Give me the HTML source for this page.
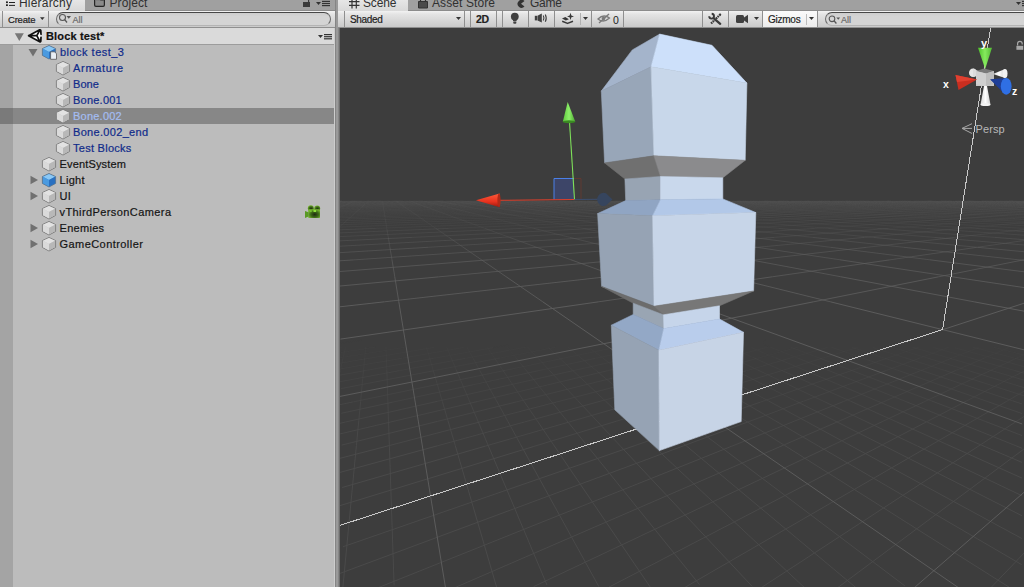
<!DOCTYPE html>
<html><head><meta charset="utf-8">
<style>
html,body{margin:0;padding:0;width:1024px;height:587px;overflow:hidden;background:#a2a2a2;}
body{position:relative;font-family:"Liberation Sans",sans-serif;}
.a{position:absolute;}
.t{position:absolute;white-space:nowrap;font-size:11px;line-height:16px;height:16px;-webkit-text-stroke:0.2px currentColor;}
.tabbar{top:0;height:10px;background:#a0a0a0;border-bottom:1px solid #8c8c8c;}
.toolbar{top:11px;height:16px;background:linear-gradient(#f2f2f2,#e4e4e4 20%,#cacaca);border-bottom:1px solid #8f8f8f;}
.sep{position:absolute;top:11px;width:1px;height:16px;background:#8f8f8f;}
.pill{position:absolute;border:1px solid #6a6a6a;border-top-color:#474747;border-bottom-color:#b4b4b4;border-radius:7px;background:linear-gradient(#cdcdcd,#d4d4d4 30%,#d4d4d4);}
.row{position:absolute;left:13px;width:322px;height:16px;}
.blue{color:#102b8a;}
.blk{color:#141414;}
</style></head><body>
<!-- LEFT PANEL -->
<div class="a tabbar" style="left:0;width:335px;"></div>
<div class="a" style="left:0;top:0;width:85px;height:11px;background:linear-gradient(#e6e6e6,#d8d8d8);"></div>
<div class="a toolbar" style="left:0;width:335px;"></div>
<div class="a" style="left:0;top:28px;width:335px;height:16px;background:#dadada;border-bottom:1px solid #9c9c9c;"></div>
<div class="a" style="left:0;top:45px;width:13px;height:542px;background:#a4a4a4;"></div>
<div class="a" style="left:13px;top:45px;width:322px;height:542px;background:#bcbcbc;"></div>
<div class="a" style="left:0;top:108px;width:13px;height:16px;background:#7a7a7a;"></div>
<div class="a" style="left:13px;top:108px;width:322px;height:16px;background:#878787;"></div>


<!-- tab texts -->
<svg class="a" style="left:5px;top:0px" width="12" height="8"><rect x="1" y="1.4" width="1.9" height="1.7" fill="#222"/><rect x="1" y="4.3" width="1.9" height="1.7" fill="#222"/><rect x="4" y="2" width="6" height="1" fill="#222"/><rect x="4" y="4.9" width="6" height="1" fill="#222"/></svg>
<div class="t" style="left:19px;top:-5px;color:#222;font-size:12px;letter-spacing:0.2px;-webkit-text-stroke:0;color:#303030">Hierarchy</div>
<svg class="a" style="left:93px;top:0" width="13" height="9"><rect x="1.6" y="-3" width="9.8" height="9.3" rx="1.3" fill="#8a8a8a" stroke="#262626" stroke-width="1.2"/><rect x="7.2" y="-1" width="3.6" height="1.5" fill="#262626"/><rect x="2.4" y="-1" width="4.5" height="1.6" fill="#7a7a7a"/></svg>
<div class="t" style="left:109.5px;top:-5px;color:#2a2a2a;font-size:12px;letter-spacing:0.1px;-webkit-text-stroke:0;color:#303030">Project</div>
<svg class="a" style="left:302px;top:0" width="10" height="8"><rect x="1" y="2" width="7" height="5" fill="#3a3a3a"/><rect x="6" y="0" width="1.2" height="3" fill="#3a3a3a"/></svg>
<svg class="a" style="left:315px;top:0" width="17" height="8"><polygon points="1,2 6,2 3.5,5" fill="#333"/><rect x="7" y="0.8" width="8" height="1.2" fill="#333"/><rect x="7" y="2.9" width="8" height="1.2" fill="#333"/><rect x="7" y="5" width="8" height="1.2" fill="#333"/></svg>
<!-- toolbar -->
<div class="sep" style="left:2px"></div>
<div class="sep" style="left:48px"></div>
<div class="t" style="left:8px;top:12px;color:#1e1e1e;font-size:9.5px;letter-spacing:-0.2px">Create</div>
<svg class="a" style="left:40px;top:16.5px" width="6" height="4"><polygon points="0,0.3 4.6,0.3 2.3,3" fill="#333"/></svg>
<div class="pill" style="left:55.5px;top:12px;width:273.5px;height:12px;"></div>
<svg class="a" style="left:58px;top:13px" width="14" height="11"><circle cx="4.5" cy="4.5" r="3" fill="none" stroke="#555" stroke-width="1.1"/><line x1="6.7" y1="6.7" x2="9" y2="9.5" stroke="#555" stroke-width="1.3"/><polygon points="8.5,3 13,3 10.75,5.8" fill="#555"/></svg>
<div class="t" style="left:72.5px;top:12px;color:#6a6a6a;font-size:9px;">All</div>
<!-- header -->
<svg class="a" style="left:14px;top:32px" width="11" height="10"><polygon points="0.8,1.2 9.8,1.2 5.3,9" fill="#777"/></svg>
<svg class="a" style="left:27px;top:28px" width="16" height="16"><path d="M1.4 7.7 L12.9 1.6 L14 6.6 L13.2 7.8 L14 9 L12.9 14.3 Z" fill="#fff"/><path d="M1.6 7.7 L12.7 1.8 Q13.6 1.6 13.8 2.6 L14 6.2 M14 9.3 L13.8 13 Q13.6 14.1 12.7 13.7 L1.6 7.7 M9.8 7.7 H2.5 M9.8 7.7 L12.8 2.2 M9.8 7.7 L12.8 13.4" fill="none" stroke="#111" stroke-width="1.75" stroke-linejoin="round" stroke-linecap="round"/></svg>
<div class="t" style="left:46px;top:28px;color:#111;font-weight:bold;font-size:11px;letter-spacing:0.15px">Block test*</div>
<svg class="a" style="left:317px;top:33px" width="17" height="8"><polygon points="1,2 6,2 3.5,5" fill="#333"/><rect x="7" y="1" width="8" height="1.2" fill="#333"/><rect x="7" y="3.1" width="8" height="1.2" fill="#333"/><rect x="7" y="5.2" width="8" height="1.2" fill="#333"/></svg>
<!-- rows -->
<svg class="a" style="left:28px;top:47px" width="11" height="10"><polygon points="0.5,2 9.5,2 5,9.5" fill="#707070"/></svg>
<svg class="a" style="left:41px;top:44px" width="16" height="16">
<polygon points="8,1.5 14.6,4.6 14.6,11.4 8,15 1.4,11.4 1.4,4.6" fill="#3a86d0" stroke="#5a6e80" stroke-width="0.8" stroke-linejoin="round"/>
<polygon points="8,1.9 14.1,4.8 8,8 1.9,4.8" fill="#8cc8f4"/>
<polygon points="1.9,4.8 8,8 8,14.5 1.9,11.2" fill="#4a9ae0"/>
<polygon points="14.1,4.8 8,8 8,14.5 14.1,11.2" fill="#2a70c0"/>
<path d="M9.6 7.8 H13.5 L15.5 9.8 V15.3 H9.6 Z" fill="#e8eef4" stroke="#555" stroke-width="0.8"/></svg>
<div class="t blue" style="left:60px;top:44px;letter-spacing:0.48px">block test_3</div>
<svg class="a" style="left:55px;top:60px" width="16" height="16">
<polygon points="8,1.5 14.6,4.6 14.6,11.4 8,15 1.4,11.4 1.4,4.6" fill="#c8c8c8" stroke="#7c7c7c" stroke-width="1" stroke-linejoin="round"/>
<polygon points="8,1.9 14.1,4.8 8,8 1.9,4.8" fill="#e2e2e2"/>
<polygon points="1.9,4.8 8,8 8,14.5 1.9,11.2" fill="#dadada"/>
<polygon points="14.1,4.8 8,8 8,14.5 14.1,11.2" fill="#b8b8b8"/>
</svg>
<div class="t blue" style="left:73px;top:60px;letter-spacing:0.7px;">Armature</div>
<svg class="a" style="left:55px;top:76px" width="16" height="16">
<polygon points="8,1.5 14.6,4.6 14.6,11.4 8,15 1.4,11.4 1.4,4.6" fill="#c8c8c8" stroke="#7c7c7c" stroke-width="1" stroke-linejoin="round"/>
<polygon points="8,1.9 14.1,4.8 8,8 1.9,4.8" fill="#e2e2e2"/>
<polygon points="1.9,4.8 8,8 8,14.5 1.9,11.2" fill="#dadada"/>
<polygon points="14.1,4.8 8,8 8,14.5 14.1,11.2" fill="#b8b8b8"/>
</svg>
<div class="t blue" style="left:73px;top:76px;letter-spacing:0.05px;">Bone</div>
<svg class="a" style="left:55px;top:92px" width="16" height="16">
<polygon points="8,1.5 14.6,4.6 14.6,11.4 8,15 1.4,11.4 1.4,4.6" fill="#c8c8c8" stroke="#7c7c7c" stroke-width="1" stroke-linejoin="round"/>
<polygon points="8,1.9 14.1,4.8 8,8 1.9,4.8" fill="#e2e2e2"/>
<polygon points="1.9,4.8 8,8 8,14.5 1.9,11.2" fill="#dadada"/>
<polygon points="14.1,4.8 8,8 8,14.5 14.1,11.2" fill="#b8b8b8"/>
</svg>
<div class="t blue" style="left:73px;top:92px;letter-spacing:0.23px;">Bone.001</div>
<svg class="a" style="left:55px;top:108px" width="16" height="16">
<polygon points="8,1.5 14.6,4.6 14.6,11.4 8,15 1.4,11.4 1.4,4.6" fill="#c8c8c8" stroke="#7c7c7c" stroke-width="1" stroke-linejoin="round"/>
<polygon points="8,1.9 14.1,4.8 8,8 1.9,4.8" fill="#e2e2e2"/>
<polygon points="1.9,4.8 8,8 8,14.5 1.9,11.2" fill="#dadada"/>
<polygon points="14.1,4.8 8,8 8,14.5 14.1,11.2" fill="#b8b8b8"/>
</svg>
<div class="t " style="left:73px;top:108px;color:#a4bdf2;letter-spacing:0.23px;">Bone.002</div>
<svg class="a" style="left:55px;top:124px" width="16" height="16">
<polygon points="8,1.5 14.6,4.6 14.6,11.4 8,15 1.4,11.4 1.4,4.6" fill="#c8c8c8" stroke="#7c7c7c" stroke-width="1" stroke-linejoin="round"/>
<polygon points="8,1.9 14.1,4.8 8,8 1.9,4.8" fill="#e2e2e2"/>
<polygon points="1.9,4.8 8,8 8,14.5 1.9,11.2" fill="#dadada"/>
<polygon points="14.1,4.8 8,8 8,14.5 14.1,11.2" fill="#b8b8b8"/>
</svg>
<div class="t blue" style="left:73px;top:124px;letter-spacing:0.32px;">Bone.002_end</div>
<svg class="a" style="left:55px;top:140px" width="16" height="16">
<polygon points="8,1.5 14.6,4.6 14.6,11.4 8,15 1.4,11.4 1.4,4.6" fill="#c8c8c8" stroke="#7c7c7c" stroke-width="1" stroke-linejoin="round"/>
<polygon points="8,1.9 14.1,4.8 8,8 1.9,4.8" fill="#e2e2e2"/>
<polygon points="1.9,4.8 8,8 8,14.5 1.9,11.2" fill="#dadada"/>
<polygon points="14.1,4.8 8,8 8,14.5 14.1,11.2" fill="#b8b8b8"/>
</svg>
<div class="t blue" style="left:73px;top:140px;letter-spacing:0.27px;">Test Blocks</div>
<svg class="a" style="left:41px;top:156px" width="16" height="16">
<polygon points="8,1.5 14.6,4.6 14.6,11.4 8,15 1.4,11.4 1.4,4.6" fill="#c8c8c8" stroke="#7c7c7c" stroke-width="1" stroke-linejoin="round"/>
<polygon points="8,1.9 14.1,4.8 8,8 1.9,4.8" fill="#e2e2e2"/>
<polygon points="1.9,4.8 8,8 8,14.5 1.9,11.2" fill="#dadada"/>
<polygon points="14.1,4.8 8,8 8,14.5 14.1,11.2" fill="#b8b8b8"/>
</svg>
<div class="t blk" style="left:59.5px;top:156px;letter-spacing:0.16px;">EventSystem</div>
<svg class="a" style="left:29px;top:175px" width="10" height="10"><polygon points="1.5,0.8 9,5 1.5,9.2" fill="#707070"/></svg>
<svg class="a" style="left:41px;top:172px" width="16" height="16">
<polygon points="8,1.5 14.6,4.6 14.6,11.4 8,15 1.4,11.4 1.4,4.6" fill="#3a86d0" stroke="#5a6e80" stroke-width="0.8" stroke-linejoin="round"/>
<polygon points="8,1.9 14.1,4.8 8,8 1.9,4.8" fill="#8cc8f4"/>
<polygon points="1.9,4.8 8,8 8,14.5 1.9,11.2" fill="#4a9ae0"/>
<polygon points="14.1,4.8 8,8 8,14.5 14.1,11.2" fill="#2a70c0"/>
</svg>
<div class="t blk" style="left:59.5px;top:172px;letter-spacing:0.3px;">Light</div>
<svg class="a" style="left:29px;top:191px" width="10" height="10"><polygon points="1.5,0.8 9,5 1.5,9.2" fill="#707070"/></svg>
<svg class="a" style="left:41px;top:188px" width="16" height="16">
<polygon points="8,1.5 14.6,4.6 14.6,11.4 8,15 1.4,11.4 1.4,4.6" fill="#c8c8c8" stroke="#7c7c7c" stroke-width="1" stroke-linejoin="round"/>
<polygon points="8,1.9 14.1,4.8 8,8 1.9,4.8" fill="#e2e2e2"/>
<polygon points="1.9,4.8 8,8 8,14.5 1.9,11.2" fill="#dadada"/>
<polygon points="14.1,4.8 8,8 8,14.5 14.1,11.2" fill="#b8b8b8"/>
</svg>
<div class="t blk" style="left:59.5px;top:188px;letter-spacing:0.3px;">UI</div>
<svg class="a" style="left:41px;top:204px" width="16" height="16">
<polygon points="8,1.5 14.6,4.6 14.6,11.4 8,15 1.4,11.4 1.4,4.6" fill="#c8c8c8" stroke="#7c7c7c" stroke-width="1" stroke-linejoin="round"/>
<polygon points="8,1.9 14.1,4.8 8,8 1.9,4.8" fill="#e2e2e2"/>
<polygon points="1.9,4.8 8,8 8,14.5 1.9,11.2" fill="#dadada"/>
<polygon points="14.1,4.8 8,8 8,14.5 14.1,11.2" fill="#b8b8b8"/>
</svg>
<div class="t blk" style="left:59.5px;top:204px;letter-spacing:0.41px;">vThirdPersonCamera</div>
<svg class="a" style="left:29px;top:223px" width="10" height="10"><polygon points="1.5,0.8 9,5 1.5,9.2" fill="#707070"/></svg>
<svg class="a" style="left:41px;top:220px" width="16" height="16">
<polygon points="8,1.5 14.6,4.6 14.6,11.4 8,15 1.4,11.4 1.4,4.6" fill="#c8c8c8" stroke="#7c7c7c" stroke-width="1" stroke-linejoin="round"/>
<polygon points="8,1.9 14.1,4.8 8,8 1.9,4.8" fill="#e2e2e2"/>
<polygon points="1.9,4.8 8,8 8,14.5 1.9,11.2" fill="#dadada"/>
<polygon points="14.1,4.8 8,8 8,14.5 14.1,11.2" fill="#b8b8b8"/>
</svg>
<div class="t blk" style="left:59.5px;top:220px;letter-spacing:0.3px;">Enemies</div>
<svg class="a" style="left:29px;top:239px" width="10" height="10"><polygon points="1.5,0.8 9,5 1.5,9.2" fill="#707070"/></svg>
<svg class="a" style="left:41px;top:236px" width="16" height="16">
<polygon points="8,1.5 14.6,4.6 14.6,11.4 8,15 1.4,11.4 1.4,4.6" fill="#c8c8c8" stroke="#7c7c7c" stroke-width="1" stroke-linejoin="round"/>
<polygon points="8,1.9 14.1,4.8 8,8 1.9,4.8" fill="#e2e2e2"/>
<polygon points="1.9,4.8 8,8 8,14.5 1.9,11.2" fill="#dadada"/>
<polygon points="14.1,4.8 8,8 8,14.5 14.1,11.2" fill="#b8b8b8"/>
</svg>
<div class="t blk" style="left:59.5px;top:236px;letter-spacing:0.44px;">GameController</div>

<svg class="a" style="left:304px;top:204px" width="17" height="15"><defs><radialGradient id="cg" cx="0.55" cy="0.6" r="0.6"><stop offset="0" stop-color="#1e2a10"/><stop offset="0.55" stop-color="#3d6a18"/><stop offset="1" stop-color="#78b830"/></radialGradient></defs>
<circle cx="6.8" cy="4.2" r="3" fill="url(#cg)"/><circle cx="13.2" cy="4.4" r="3" fill="url(#cg)"/>
<rect x="4.2" y="5.2" width="11.8" height="8.8" rx="0.8" fill="url(#cg)"/><path d="M1 7 L4.5 8.3 V12.5 L1 14 Z" fill="#5a9a24"/><rect x="9.5" y="6" width="2.6" height="2" fill="#8ee03a"/><rect x="6.2" y="6.5" width="1.4" height="1.4" fill="#7ad030"/></svg>
<!-- separator -->
<div class="a" style="left:334px;top:28px;width:1px;height:559px;background:#cdcdcd;"></div>
<div class="a" style="left:335px;top:0;width:5px;height:587px;background:linear-gradient(90deg,#7a7a7a,#9a9a9a 30%,#9a9a9a 55%,#606060);"></div>
<!-- RIGHT PANEL -->
<div class="a tabbar" style="left:340px;width:684px;"></div>
<div class="a" style="left:338px;top:0;width:70px;height:11px;background:linear-gradient(#e6e6e6,#d8d8d8);"></div>
<div class="a toolbar" style="left:338px;width:686px;"></div>

<!-- scene tabs -->
<svg class="a" style="left:348px;top:0" width="13" height="9"><path d="M4 -1 V8.5 M8.3 -1 V8.5 M1 1.6 H11.5 M1 5.3 H11.5" stroke="#333" stroke-width="1.2"/></svg>
<div class="t" style="left:363px;top:-5px;color:#2a2a2a;font-size:12px;letter-spacing:-0.15px;-webkit-text-stroke:0;color:#303030">Scene</div>
<svg class="a" style="left:417px;top:0" width="12" height="9"><path d="M1.5 1.5 H10.5 V8 H1.5 Z" fill="#4a4a4a" stroke="#333" stroke-width="1"/><path d="M3.5 1.5 V-1 M8.5 1.5 V-1" stroke="#333" stroke-width="1.2"/></svg>
<div class="t" style="left:432px;top:-5px;color:#2a2a2a;font-size:12px;letter-spacing:0.1px;-webkit-text-stroke:0;color:#303030">Asset Store</div>
<svg class="a" style="left:516px;top:0" width="10" height="9"><path d="M8.5 1 A4 4 0 1 0 8.5 6.6 L5 3.8 Z" fill="#333"/></svg>
<div class="t" style="left:530px;top:-5px;color:#2a2a2a;font-size:12px;letter-spacing:-0.25px;-webkit-text-stroke:0;color:#303030">Game</div>
<svg class="a" style="left:1015px;top:0" width="10" height="8"><polygon points="1,2 6,2 3.5,5" fill="#333"/><rect x="7" y="0.8" width="8" height="1.2" fill="#333"/><rect x="7" y="2.9" width="8" height="1.2" fill="#333"/><rect x="7" y="5" width="8" height="1.2" fill="#333"/></svg>
<!-- scene toolbar -->
<div class="sep" style="left:344px"></div>
<div class="t" style="left:350px;top:12px;color:#1e1e1e;font-size:10px;letter-spacing:-0.35px">Shaded</div>
<svg class="a" style="left:456px;top:17px" width="6" height="4"><polygon points="0,0 5,0 2.5,3" fill="#333"/></svg>
<div class="sep" style="left:464px"></div>
<div class="sep" style="left:470px"></div>
<div class="t" style="left:476px;top:11px;color:#222;font-size:10.5px;font-weight:bold;letter-spacing:-0.4px">2D</div>
<div class="sep" style="left:496px"></div>
<div class="sep" style="left:502px"></div>
<svg class="a" style="left:510px;top:12px" width="10" height="13"><circle cx="4.8" cy="4.6" r="3.9" fill="#404040"/><rect x="3" y="7" width="3.6" height="2.2" fill="#404040"/><rect x="3.2" y="9.6" width="3.2" height="2.2" rx="1" fill="#404040"/></svg>
<div class="sep" style="left:528px"></div>
<svg class="a" style="left:534px;top:13px" width="14" height="10"><rect x="0.8" y="2.8" width="2.4" height="4.6" fill="#404040"/><path d="M3.5 2.8 L7.8 0.6 V9.6 L3.5 7.4 Z" fill="#404040"/><path d="M9.3 2.6 Q10.6 5.1 9.3 7.6 M11.3 1.4 Q13.2 5.1 11.3 8.8" fill="none" stroke="#404040" stroke-width="1.1"/></svg>
<div class="sep" style="left:554px"></div>
<svg class="a" style="left:561px;top:12px" width="14" height="13"><path d="M9.5 0.8 L10.4 3.5 L13 4.4 L10.4 5.3 L9.5 8 L8.6 5.3 L6 4.4 L8.6 3.5 Z" fill="#383838"/><path d="M1 6.6 L4.3 4.9 L7.9 7.2 L4.8 8.6 Z" fill="#383838"/><path d="M1.2 9.3 L6.5 11.4 L12 9.3" fill="none" stroke="#383838" stroke-width="1.5" stroke-linejoin="round"/></svg>
<div class="a" style="left:580px;top:13px;width:1px;height:12px;background:#b0b0b0;"></div>
<svg class="a" style="left:583px;top:17px" width="6" height="4"><polygon points="0,0 5,0 2.5,3" fill="#333"/></svg>
<div class="sep" style="left:591px"></div>
<svg class="a" style="left:597px;top:13px" width="14" height="11"><path d="M1 6 Q6.5 0.5 12.5 5 Q6.5 10.5 1 6 Z" fill="none" stroke="#7a7a7a" stroke-width="1.3"/><circle cx="6.5" cy="5.6" r="1.8" fill="#7a7a7a"/><path d="M2 10 L12 1" stroke="#7a7a7a" stroke-width="1.3"/></svg>
<div class="t" style="left:613px;top:12px;color:#222;font-size:10.5px;-webkit-text-stroke:0;">0</div>
<div class="sep" style="left:623px"></div>
<div class="sep" style="left:702px"></div>
<svg class="a" style="left:707px;top:12px" width="16" height="14"><path d="M7.4 6.8 L13.2 11.8" stroke="#3a3a3a" stroke-width="2.3" stroke-linecap="round"/><path d="M2.2 4.3 A2.4 2.4 0 1 0 4.7 1.8" fill="none" stroke="#3a3a3a" stroke-width="1.9"/><path d="M13.4 2.3 L3.6 12" stroke="#3a3a3a" stroke-width="2.2" stroke-dasharray="1.6 0.7"/><path d="M13.8 1.9 L12.6 3.1" stroke="#3a3a3a" stroke-width="1.6"/></svg>
<div class="sep" style="left:728px"></div>
<svg class="a" style="left:735px;top:14px" width="15" height="10"><rect x="1" y="1" width="8" height="8" rx="1.5" fill="#404040"/><path d="M9 3.5 L13 0.8 V9.2 L9 6.5 Z" fill="#404040"/></svg>
<svg class="a" style="left:754px;top:17px" width="6" height="4"><polygon points="0,0 5,0 2.5,3" fill="#333"/></svg>
<div class="sep" style="left:762px"></div>
<div class="a" style="left:763px;top:11px;width:54px;height:16px;background:linear-gradient(#fbfbfb,#ececec);"></div>
<div class="t" style="left:768px;top:12px;color:#1e1e1e;font-size:10px;letter-spacing:-0.25px">Gizmos</div>
<div class="a" style="left:806px;top:14px;width:1px;height:11px;background:#bdbdbd;"></div>
<svg class="a" style="left:809px;top:17px" width="6" height="4"><polygon points="0,0 5,0 2.5,3" fill="#333"/></svg>
<div class="sep" style="left:817px"></div>
<div class="pill" style="left:825px;top:12px;width:220px;height:12px;"></div>
<svg class="a" style="left:828px;top:14px" width="14" height="11"><circle cx="4" cy="4.8" r="2.8" fill="none" stroke="#555" stroke-width="1.1"/><line x1="6" y1="6.8" x2="8.4" y2="9.5" stroke="#555" stroke-width="1.3"/><polygon points="8.3,3.4 12.2,3.4 10.25,5.8" fill="#555"/></svg>
<div class="t" style="left:841px;top:12px;color:#6a6a6a;font-size:9px;">All</div>

<!--SCENE--><svg class="a" style="left:340px;top:28px" width="684" height="559" viewBox="340 28 684 559">
<rect x="340" y="28" width="684" height="559" fill="#3d3d3d"/>
<g><path d="M345.5 347.4L347.1 340.0M365.8 346.8L366.4 340.2M386.0 347.1L385.7 339.7M426.6 347.6L424.4 340.1M446.7 347.0L443.5 339.6M467.0 347.3L462.9 339.8M487.5 347.6L482.4 340.1M507.3 347.0L501.9 340.3M527.7 347.2L520.8 339.8M1008.6 347.6L1025.3 340.3M548.3 347.5L540.3 340.0M978.7 347.4L996.7 340.2M567.8 346.9L559.9 340.3M948.7 347.3L968.2 340.1M588.4 347.2L578.5 339.7M918.9 347.2L939.7 340.0M628.4 346.8L617.9 340.2M857.4 347.5L881.1 340.3M649.0 347.1L636.3 339.7M827.6 347.4L852.6 340.1M669.8 347.4L656.0 339.9M797.8 347.2L824.2 340.0M690.6 347.7L675.8 340.2M768.0 347.1L795.8 339.9M709.6 347.1L694.0 339.6M736.0 347.6L765.3 340.3M730.4 347.3L713.8 339.9M706.3 347.4L736.9 340.2M751.3 347.6L733.7 340.1M676.6 347.3L708.6 340.1M770.1 347.0L751.7 339.6M646.9 347.2L680.3 340.0M791.1 347.3L771.6 339.8M614.6 347.6L652.0 339.8M830.6 346.9L811.5 340.3M555.3 347.4L592.9 340.1M851.6 347.2L829.3 339.8M525.8 347.2L564.7 340.0M872.7 347.5L849.3 340.0M493.0 347.7L536.5 339.9M891.0 346.9L869.4 340.2M463.4 347.5L505.3 340.3M912.2 347.1L886.9 339.7M433.9 347.4L477.1 340.2M933.3 347.4L907.1 339.9M404.5 347.3L449.0 340.1M954.6 347.7L927.3 340.2M375.1 347.2L420.9 339.9M972.6 347.1L944.5 339.6M341.9 347.6L392.8 339.8M993.9 347.4L964.8 339.9M339.3 343.5L361.3 340.2M1025.9 345.3L1002.1 339.6M1025.8 340.6L1022.4 339.8" stroke="#4a4a4a" stroke-opacity="0.06" fill="none"/>
<path d="M343.2 357.6L345.5 347.4M364.7 357.9L365.8 346.8M386.4 358.2L386.0 347.1M429.6 357.9L426.6 347.6M451.3 358.2L446.7 347.0M473.2 358.5L467.0 347.3M494.4 357.8L487.5 347.6M516.3 358.1L507.3 347.0M1016.2 358.3L1025.8 353.8M538.2 358.4L527.7 347.2M984.2 358.2L1008.6 347.6M559.2 357.7L548.3 347.5M952.2 358.0L978.7 347.4M581.1 358.0L567.8 346.9M920.3 357.9L948.7 347.3M603.2 358.3L588.4 347.2M886.5 358.4L918.9 347.2M646.0 358.0L628.4 346.8M822.7 358.1L857.4 347.5M668.1 358.3L649.0 347.1M790.9 357.9L827.6 347.4M688.5 357.6L669.8 347.4M756.7 358.5L797.8 347.2M710.7 357.9L690.6 347.7M724.9 358.3L768.0 347.1M733.0 358.2L709.6 347.1M693.2 358.2L736.0 347.6M753.1 357.5L730.4 347.3M661.4 358.0L706.3 347.4M775.4 357.8L751.3 347.6M629.8 357.9L676.6 347.3M797.8 358.1L770.1 347.0M595.1 358.4L646.9 347.2M820.3 358.4L791.1 347.3M563.5 358.2L614.6 347.6M862.6 358.1L830.6 346.9M500.3 357.9L555.3 347.4M885.2 358.4L851.6 347.2M465.2 358.4L525.8 347.2M904.7 357.7L872.7 347.5M433.7 358.3L493.0 347.7M927.3 358.0L891.0 346.9M402.2 358.2L463.4 347.5M950.0 358.3L912.2 347.1M370.7 358.0L433.9 347.4M969.3 357.6L933.3 347.4M339.3 357.9L404.5 347.3M992.0 357.9L954.6 347.7M340.7 352.6L375.1 347.2M1014.8 358.2L972.6 347.1M338.0 348.2L341.9 347.6M1026.1 355.6L993.9 347.4" stroke="#4a4a4a" stroke-opacity="0.19" fill="none"/>
<path d="M340.3 370.4L343.2 357.6M363.5 370.7L364.7 357.9M386.8 369.9L386.4 358.2M433.3 370.7L429.6 357.9M456.3 369.9L451.3 358.2M479.6 370.2L473.2 358.5M503.1 370.6L494.4 357.8M1024.9 370.7L1026.3 369.9M525.7 369.8L516.3 358.1M990.5 370.5L1016.2 358.3M549.2 370.1L538.2 358.4M956.2 370.3L984.2 358.2M572.8 370.5L559.2 357.7M920.0 370.9L952.2 358.0M596.5 370.8L581.1 358.0M885.7 370.7L920.3 357.9M618.7 370.1L603.2 358.3M851.4 370.6L886.5 358.4M666.3 370.8L646.0 358.0M783.1 370.2L822.7 358.1M688.2 370.0L668.1 358.3M746.3 370.8L790.9 357.9M712.0 370.3L688.5 357.6M712.2 370.6L756.7 358.5M736.0 370.7L710.7 357.9M678.1 370.5L724.9 358.3M757.6 369.9L733.0 358.2M644.1 370.3L693.2 358.2M781.5 370.3L753.1 357.5M606.9 370.9L661.4 358.0M805.6 370.6L775.4 357.8M572.9 370.7L629.8 357.9M826.9 369.8L797.8 358.1M538.9 370.6L595.1 358.4M851.0 370.2L820.3 358.4M505.0 370.4L563.5 358.2M899.5 370.9L862.6 358.1M433.4 370.8L500.3 357.9M920.4 370.1L885.2 358.4M399.6 370.6L465.2 358.4M944.7 370.4L904.7 357.7M365.8 370.5L433.7 358.3M969.1 370.8L927.3 358.0M340.8 368.8L402.2 358.2M989.7 370.0L950.0 358.3M338.0 363.5L370.7 358.0M1014.2 370.4L969.3 357.6M1026.4 367.3L992.0 357.9M1026.2 361.3L1014.8 358.2" stroke="#4a4a4a" stroke-opacity="0.31" fill="none"/>
<path d="M337.3 383.9L340.3 370.4M362.2 384.3L363.5 370.7M387.3 384.7L386.8 369.9M437.3 384.2L433.3 370.7M462.5 384.6L456.3 369.9M487.8 385.1L479.6 370.2M512.3 384.1L503.1 370.6M997.8 384.7L1024.9 370.7M537.7 384.5L525.7 369.8M960.7 384.5L990.5 370.5M563.1 385.0L549.2 370.1M921.7 385.2L956.2 370.3M587.3 384.0L572.8 370.5M884.7 385.0L920.0 370.9M612.8 384.5L596.5 370.8M847.7 384.8L885.7 370.7M638.4 384.9L618.7 370.1M810.8 384.6L851.4 370.6M687.8 384.4L666.3 370.8M734.3 385.1L783.1 370.2M713.5 384.8L688.2 370.0M697.4 384.9L746.3 370.8M739.4 385.2L712.0 370.3M660.7 384.7L712.2 370.6M762.7 384.3L736.0 370.7M624.0 384.5L678.1 370.5M788.6 384.7L757.6 369.9M583.8 385.2L644.1 370.3M814.6 385.1L781.5 370.3M547.1 385.0L606.9 370.9M837.6 384.2L805.6 370.6M510.4 384.8L572.9 370.7M863.7 384.6L826.9 369.8M473.9 384.6L538.9 370.6M889.8 385.0L851.0 370.2M437.4 384.4L505.0 370.4M938.6 384.5L899.5 370.9M360.0 384.9L433.4 370.8M964.9 384.9L920.4 370.1M337.9 382.1L399.6 370.6M987.2 384.0L944.7 370.4M339.4 375.2L365.8 370.5M1013.5 384.4L969.1 370.8M1026.6 380.9L989.7 370.0M1026.5 373.9L1014.2 370.4" stroke="#4a4a4a" stroke-opacity="0.44" fill="none"/>
<path d="M360.6 401.7L362.2 384.3M387.9 402.2L387.3 384.7M442.4 401.6L437.3 384.2M469.9 402.1L462.5 384.6M496.6 401.0L487.8 385.1M1006.4 401.5L1027.0 389.5M524.1 401.5L512.3 384.1M966.1 401.2L997.8 384.7M551.8 402.0L537.7 384.5M923.8 402.0L960.7 384.5M578.1 400.9L563.1 385.0M883.5 401.8L921.7 385.2M605.8 401.4L587.3 384.0M843.3 401.6L884.7 385.0M633.6 401.8L612.8 384.5M803.3 401.3L847.7 384.8M659.4 400.8L638.4 384.9M760.2 402.2L810.8 384.6M715.3 401.7L687.8 384.4M680.2 401.7L734.3 385.1M740.7 400.7L713.5 384.8M640.2 401.4L697.4 384.9M768.8 401.1L739.4 385.2M600.4 401.2L660.7 384.7M797.0 401.6L762.7 384.3M556.6 402.0L624.0 384.5M825.3 402.1L788.6 384.7M516.8 401.8L583.8 385.2M850.2 401.0L814.6 385.1M477.0 401.6L547.1 385.0M878.5 401.5L837.6 384.2M437.4 401.3L510.4 384.8M907.0 402.0L863.7 384.6M392.9 402.1L473.9 384.6M931.5 400.9L889.8 385.0M353.3 401.9L437.4 384.4M988.6 401.9L938.6 384.5M341.1 388.6L360.0 384.9M1012.7 400.8L964.9 384.9M1026.9 396.7L987.2 384.0M1026.8 388.5L1013.5 384.4" stroke="#4a4a4a" stroke-opacity="0.56" fill="none"/>
<path d="M358.8 420.6L360.6 401.7M388.5 421.2L387.9 402.2M447.9 420.5L442.4 401.6M477.9 421.0L469.9 402.1M1016.5 421.3L1026.0 415.2M508.0 421.6L496.6 401.0M970.3 422.3L1006.4 401.5M538.2 422.2L524.1 401.5M926.2 422.0L966.1 401.2M567.1 420.9L551.8 402.0M882.1 421.7L923.8 402.0M597.4 421.5L578.1 400.9M838.2 421.5L883.5 401.8M627.9 422.1L605.8 401.4M794.3 421.2L843.3 401.6M656.2 420.8L633.6 401.8M747.2 422.2L803.3 401.3M686.7 421.4L659.4 400.8M703.4 421.9L760.2 402.2M745.3 420.6L715.3 401.7M616.0 421.3L680.2 401.7M776.0 421.2L740.7 400.7M568.1 422.3L640.2 401.4M806.9 421.8L768.8 401.1M524.4 422.0L600.4 401.2M834.2 420.5L797.0 401.6M480.8 421.7L556.6 402.0M865.1 421.1L825.3 402.1M437.4 421.4L516.8 401.8M896.2 421.7L850.2 401.0M394.0 421.2L477.0 401.6M927.5 422.3L878.5 401.5M345.2 422.1L437.4 401.3M954.2 421.0L907.0 402.0M341.3 413.3L392.9 402.1M985.5 421.5L931.5 400.9M337.8 405.1L353.3 401.9M1022.2 413.6L988.6 401.9M1022.2 404.0L1012.7 400.8" stroke="#4a4a4a" stroke-opacity="0.69" fill="none"/>
<path d="M356.4 445.5L358.8 420.6M389.4 446.2L388.5 421.2M455.2 445.3L447.9 420.5M488.4 446.0L477.9 421.0M977.9 446.5L1016.5 421.3M520.5 444.4L508.0 421.6M929.1 446.2L970.3 422.3M553.8 445.2L538.2 422.2M880.5 445.8L926.2 422.0M587.3 445.9L567.1 420.9M831.9 445.5L882.1 421.7M620.9 446.6L597.4 421.5M783.6 445.1L838.2 421.5M652.3 445.0L627.9 422.1M731.5 446.3L794.3 421.2M686.1 445.7L656.2 420.8M683.1 446.0L747.2 422.2M720.0 446.4L686.7 421.4M634.8 445.6L703.4 421.9M784.7 445.5L745.3 420.6M533.6 446.5L616.0 421.3M818.9 446.3L776.0 421.2M485.4 446.1L568.1 422.3M849.0 444.7L806.9 421.8M437.4 445.8L524.4 422.0M883.2 445.4L834.2 420.5M389.5 445.5L480.8 421.7M917.6 446.1L865.1 421.1M341.7 445.1L437.4 421.4M947.1 444.5L896.2 421.7M337.6 434.5L394.0 421.2M981.6 445.2L927.5 422.3M339.6 423.4L345.2 422.1M1016.3 445.9L954.2 421.0M1022.1 435.6L985.5 421.5" stroke="#4a4a4a" stroke-opacity="0.81" fill="none"/>
<path d="M342.7 589.2L356.4 445.5M394.1 585.4L389.4 446.2M990.7 587.9L1026.4 550.6M497.1 588.8L455.2 445.3M834.7 589.9L1026.8 446.9M547.0 585.0L488.4 446.0M759.0 589.1L977.9 446.5M598.9 586.7L520.5 444.4M683.5 588.2L929.1 446.2M651.2 588.5L553.8 445.2M608.5 587.4L880.5 445.8M699.5 584.6L587.3 445.9M533.7 586.6L831.9 445.5M752.1 586.3L620.9 446.6M450.6 589.5L783.6 445.1M805.0 588.1L652.3 445.0M375.8 588.6L731.5 446.3M858.5 589.8L686.1 445.7M340.0 573.4L683.1 446.0M904.9 585.9L720.0 446.4M342.9 546.8L634.8 445.6M1012.6 589.4L784.7 445.5M339.8 505.7L533.6 446.5M1021.7 564.7L818.9 446.3M342.2 487.5L485.4 446.1M1021.8 538.5L849.0 444.7M337.4 473.1L437.4 445.8M1021.9 515.7L883.2 445.4M339.7 458.4L389.5 445.5M1021.9 495.7L917.6 446.1M1022.0 478.1L947.1 444.5M1022.0 462.4L981.6 445.2M1022.1 448.3L1016.3 445.9" stroke="#4a4a4a" stroke-opacity="0.94" fill="none"/>
<path d="M337.0 202.2L341.5 201.0M337.0 208.5L355.1 201.0M337.8 228.4L368.7 201.0M386.8 228.4L382.4 201.0M435.9 228.4L396.0 201.0M484.9 228.4L409.6 201.0M534.0 228.4L423.2 201.0M583.1 228.4L436.9 201.0M631.8 228.4L450.5 201.0M961.4 228.4L1027.0 222.3M680.9 228.4L464.1 201.0M888.3 228.4L1026.9 217.5M729.9 228.4L477.8 201.0M814.7 228.4L1027.0 213.9M779.0 228.4L491.4 201.0M741.6 228.4L1026.9 211.2M828.1 228.4L505.0 201.0M668.6 228.4L1027.0 209.0M877.2 228.4L518.7 201.0M595.5 228.4L1026.9 207.3M926.3 228.4L532.2 201.0M521.8 228.4L1027.0 205.8M975.4 228.4L545.9 201.0M448.7 228.4L1026.9 204.6M1024.5 228.4L559.5 201.0M375.7 228.4L1027.0 203.6M1026.8 225.9L573.1 201.0M337.1 227.2L1026.9 202.7M1026.6 223.5L586.8 201.0M337.5 224.8L1027.0 201.9M1026.3 221.5L600.4 201.0M337.1 222.8L1026.9 201.2M1026.8 219.7L614.0 201.0M337.4 220.9L1013.1 201.0M1026.6 218.0L627.7 201.0M337.0 219.3L992.7 201.0M1027.0 216.6L641.3 201.0M337.3 217.8L972.4 201.0M1026.8 215.3L655.0 201.0M337.6 216.5L952.1 201.0M1026.6 214.1L668.5 201.0M337.3 215.3L931.7 201.0M1027.0 213.1L682.1 201.0M337.5 214.2L911.4 201.0M1026.8 212.1L695.8 201.0M337.2 213.2L891.0 201.0M1026.6 211.2L709.4 201.0M337.5 212.2L870.7 201.0M1026.9 210.4L723.0 201.0M337.2 211.4L850.3 201.0M1026.8 209.6L736.7 201.0M337.4 210.6L830.0 201.0M1026.6 208.9L750.3 201.0M337.1 209.9L809.7 201.0M1026.9 208.2L764.0 201.0M337.3 209.2L789.4 201.0M1026.8 207.6L777.6 201.0M337.1 208.6L768.9 201.0M1026.6 207.1L791.3 201.0M337.3 208.0L748.6 201.0M1026.9 206.5L804.7 201.0M337.1 207.4L728.3 201.0M1026.8 206.0L818.4 201.0M337.3 206.9L708.0 201.0M1027.0 205.6L832.0 201.0M337.0 206.4L687.5 201.0M1026.9 205.1L845.7 201.0M337.2 205.9L667.2 201.0M1026.8 204.7L859.3 201.0M337.0 205.5L646.9 201.0M1027.0 204.3L873.0 201.0M337.2 205.1L626.6 201.0M1026.9 203.9L886.6 201.0M337.3 204.7L606.1 201.0M1026.8 203.6L900.3 201.0M337.2 204.3L585.8 201.0M1026.9 203.2L913.9 201.0M337.3 204.0L565.5 201.0M1026.8 202.9L927.6 201.0M337.1 203.7L545.2 201.0M1026.7 202.6L941.0 201.0M337.3 203.3L525.0 201.0M1026.9 202.3L954.6 201.0M337.1 203.0L504.5 201.0M1026.8 202.1L968.3 201.0M337.2 202.7L484.2 201.0M1026.7 201.8L981.9 201.0M337.1 202.5L463.9 201.0M1026.9 201.5L995.6 201.0M337.2 202.2L443.6 201.0M1026.8 201.3L1009.2 201.0M337.1 202.0L423.1 201.0M1027.0 201.1L1022.9 201.0M337.2 201.7L402.8 201.0M337.0 201.5L382.5 201.0M337.2 201.3L362.2 201.0M337.0 201.0L341.7 201.0" stroke="#5e5e5e" stroke-opacity="0.19" fill="none"/>
<path d="M337.1 229.1L337.8 228.4M388.3 237.4L386.8 228.4M449.0 237.4L435.9 228.4M509.5 237.4L484.9 228.4M570.1 237.4L534.0 228.4M630.8 237.4L583.1 228.4M954.8 237.4L1026.8 229.3M691.4 237.4L631.8 228.4M864.4 237.4L961.4 228.4M752.1 237.4L680.9 228.4M774.0 237.4L888.3 228.4M812.8 237.4L729.9 228.4M683.0 237.4L814.7 228.4M873.5 237.4L779.0 228.4M592.6 237.4L741.6 228.4M934.3 237.4L828.1 228.4M502.3 237.4L668.6 228.4M995.0 237.4L877.2 228.4M412.0 237.4L595.5 228.4M1026.9 235.4L926.3 228.4M337.8 236.7L521.8 228.4M1026.5 231.7L975.4 228.4M337.2 233.0L448.7 228.4M1026.3 228.5L1024.5 228.4M337.7 229.9L375.7 228.4" stroke="#5e5e5e" stroke-opacity="0.31" fill="none"/>
<path d="M389.9 247.3L388.3 237.4M463.4 247.4L449.0 237.4M537.0 247.4L509.5 237.4M610.5 247.4L570.1 237.4M976.4 247.4L1026.9 240.1M684.1 247.4L630.8 237.4M866.8 247.3L954.8 237.4M757.0 247.3L691.4 237.4M757.3 247.3L864.4 237.4M830.5 247.3L752.1 237.4M646.9 247.4L774.0 237.4M904.0 247.3L812.8 237.4M537.4 247.4L683.0 237.4M977.6 247.3L873.5 237.4M428.0 247.3L592.6 237.4M1026.5 245.2L934.3 237.4M338.1 246.3L502.3 237.4M1026.1 239.8L995.0 237.4M337.3 241.0L412.0 237.4" stroke="#5e5e5e" stroke-opacity="0.44" fill="none"/>
<path d="M392.0 259.9L389.9 247.3M481.5 259.8L463.4 247.4M571.0 259.8L537.0 247.4M1023.8 259.8L1026.6 259.3M660.7 259.8L610.5 247.4M889.5 259.9L976.4 247.4M750.3 259.8L684.1 247.4M755.8 259.9L866.8 247.3M840.0 259.8L757.0 247.3M622.2 259.8L757.3 247.3M929.8 259.8L830.5 247.3M488.8 259.8L646.9 247.4M1019.5 259.9L904.0 247.3M353.7 259.9L537.4 247.4M1026.9 252.0L977.6 247.3M337.5 252.8L428.0 247.3" stroke="#5e5e5e" stroke-opacity="0.56" fill="none"/>
<path d="M394.8 276.9L392.0 259.9M506.1 276.7L481.5 259.8M617.5 276.7L571.0 259.8M938.6 276.8L1023.8 259.8M728.9 276.7L660.7 259.8M772.3 276.8L889.5 259.9M840.5 276.7L750.3 259.8M606.2 276.8L755.8 259.9M952.1 276.8L840.0 259.8M438.4 276.9L622.2 259.8M1026.4 272.1L929.8 259.8M337.7 271.7L488.8 259.8M1025.9 260.6L1019.5 259.9M338.5 260.9L353.7 259.9" stroke="#5e5e5e" stroke-opacity="0.69" fill="none"/>
<path d="M398.8 301.7L394.8 276.9M542.6 301.7L506.1 276.7M686.4 301.8L617.5 276.7M813.1 301.9L938.6 276.8M830.4 301.8L728.9 276.7M598.7 301.8L772.3 276.8M974.5 301.9L840.5 276.7M384.5 301.8L606.2 276.8M1024.8 287.7L952.1 276.8M339.1 286.1L438.4 276.9" stroke="#5e5e5e" stroke-opacity="0.81" fill="none"/>
<path d="M445.4 587.1L398.8 301.7M915.1 587.0L1025.4 491.1M958.5 587.7L542.6 301.7M337.2 526.3L1026.9 302.3M1022.2 424.0L686.4 301.8M339.5 396.5L813.1 301.9M1026.0 350.3L830.4 301.8M340.5 339.1L598.7 301.8M1025.3 311.4L974.5 301.9M338.2 307.0L384.5 301.8" stroke="#5e5e5e" stroke-opacity="0.94" fill="none"/></g>
<path d="M339 525.7 L942.6 329.6 L990.6 28" stroke="#c8c8c8" stroke-width="1" fill="none" shape-rendering="crispEdges"/>

<polygon points="659.7,34.1 651.1,66.8 601.3,91.1 632.3,49.9" fill="#a4b4cb" stroke="#a4b4cb" stroke-width="0.6"/>
<polygon points="659.7,34.1 712,45.3 746.9,83.1 651.1,66.8" fill="#cde0fa" stroke="#cde0fa" stroke-width="0.6"/>
<polygon points="651.1,66.8 601.3,91.1 604.6,162.9 653.9,155.8" fill="#98a6b8" stroke="#98a6b8" stroke-width="0.6"/>
<polygon points="651.1,66.8 746.9,83.1 745.2,160.3 653.9,155.8" fill="#c8d7ea" stroke="#c8d7ea" stroke-width="0.6"/>
<polygon points="604.6,162.9 653.9,155.8 660.5,176.5 624.9,179" fill="#707070" stroke="#707070" stroke-width="0.6"/>
<polygon points="653.9,155.8 745.2,160.3 722.8,177.8 660.5,176.5" fill="#8b8b8d" stroke="#8b8b8d" stroke-width="0.6"/>
<polygon points="624.9,179 660.5,176.5 660.5,199.8 625.7,200.6" fill="#98a4b3" stroke="#98a4b3" stroke-width="0.6"/>
<polygon points="660.5,176.5 722.8,177.8 722.8,198.9 660.5,199.8" fill="#c9d8ec" stroke="#c9d8ec" stroke-width="0.6"/>
<polygon points="625.7,200.6 660.5,199.8 652.6,215.7 597.6,213.6" fill="#90a5c3" stroke="#90a5c3" stroke-width="0.6"/>
<polygon points="660.5,199.8 722.8,198.9 755.8,212.5 652.6,215.7" fill="#b2c8e8" stroke="#b2c8e8" stroke-width="0.6"/>
<polygon points="597.6,213.6 652.6,215.7 654.0,306.2 601.6,286.4" fill="#96a3b4" stroke="#96a3b4" stroke-width="0.6"/>
<polygon points="652.6,215.7 755.8,212.5 753.6,291.0 654.0,306.2" fill="#c7d5e8" stroke="#c7d5e8" stroke-width="0.6"/>
<polygon points="601.6,286.4 654.0,306.2 663.4,314.8 633.2,303.2" fill="#6c6c6c" stroke="#6c6c6c" stroke-width="0.6"/>
<polygon points="654.0,306.2 753.6,291.0 719.5,305.8 663.4,314.8" fill="#777777" stroke="#777777" stroke-width="0.6"/>
<polygon points="633.2,303.2 663.4,314.8 663.8,328.6 633.2,314.5" fill="#99a5b3" stroke="#99a5b3" stroke-width="0.6"/>
<polygon points="663.4,314.8 719.5,305.8 719.5,319.0 663.8,328.6" fill="#c6d5ea" stroke="#c6d5ea" stroke-width="0.6"/>
<polygon points="633.2,314.5 663.8,328.6 658.9,350.3 611.3,325.2" fill="#93a8c6" stroke="#93a8c6" stroke-width="0.6"/>
<polygon points="663.8,328.6 719.5,319.0 743.5,332.3 658.9,350.3" fill="#b9cdec" stroke="#b9cdec" stroke-width="0.6"/>
<polygon points="611.3,325.2 658.9,350.3 659.4,450.6 614.8,409.8" fill="#96a3b4" stroke="#96a3b4" stroke-width="0.6"/>
<polygon points="658.9,350.3 743.5,332.3 741.2,421.6 659.4,450.6" fill="#c7d4e6" stroke="#c7d4e6" stroke-width="0.6"/>


<rect x="554" y="178.5" width="20" height="21" fill="#3d4568"/>
<path d="M554 199.5 V178.5 H574" stroke="#4a80e8" stroke-width="1" fill="none"/>
<path d="M574 178.5 H581 V199" stroke="#6a3a30" stroke-width="0.8" fill="none"/>
<line x1="499" y1="200.3" x2="574.5" y2="199.5" stroke="#e0402c" stroke-width="1.1"/>
<line x1="569.5" y1="122" x2="574.5" y2="199.5" stroke="#7ee05a" stroke-width="1.1"/>
<line x1="574.5" y1="199.5" x2="600" y2="199.3" stroke="#3c4e6e" stroke-width="1.1"/>
<defs>
<linearGradient id="rg" x1="0" y1="0" x2="0" y2="1"><stop offset="0" stop-color="#ff5a3a"/><stop offset="0.6" stop-color="#e8321e"/><stop offset="1" stop-color="#9a1a10"/></linearGradient>
<linearGradient id="gg" x1="0" y1="0" x2="1" y2="0"><stop offset="0" stop-color="#5cc83a"/><stop offset="0.5" stop-color="#8ef06a"/><stop offset="1" stop-color="#4aa82e"/></linearGradient>
</defs>
<polygon points="476,200.2 499.6,193.5 499.6,207.2" fill="url(#rg)"/>
<ellipse cx="499" cy="200.3" rx="1.6" ry="6.8" fill="#b02a18"/>
<polygon points="567.7,102 562.8,121.8 575.3,121.8" fill="url(#gg)"/>
<ellipse cx="569" cy="121.8" rx="6.3" ry="1.5" fill="#3a8a22"/>
<path d="M603.5 192.8 A6.6 6.6 0 1 0 606 205.6 L612.5 199.5 L606 193.3 Z" fill="#36455e"/>


<defs>
<linearGradient id="vg" x1="0" y1="0" x2="1" y2="0"><stop offset="0" stop-color="#4ec02a"/><stop offset="0.5" stop-color="#86ea5e"/><stop offset="1" stop-color="#52b833"/></linearGradient>
<linearGradient id="wg" x1="0" y1="0" x2="1" y2="0"><stop offset="0" stop-color="#d8d8d8"/><stop offset="0.5" stop-color="#ffffff"/><stop offset="1" stop-color="#cfcfcf"/></linearGradient>
</defs>
<ellipse cx="973" cy="72.8" rx="4" ry="4.3" fill="#e6e6e6"/>
<polygon points="973,68.5 985,74 973,77" fill="#dcdcdc"/>
<polygon points="993,74 1005,69 1005,78" fill="url(#wg)"/>
<ellipse cx="1005" cy="73.5" rx="2.5" ry="4.5" fill="#f2f2f2"/>
<polygon points="978,47.8 992,47.8 985.2,69" fill="url(#vg)"/>
<rect x="976" y="71" width="18" height="15" fill="#c6c6c6"/>
<polygon points="976,71 984,68.5 994,71 986,73.5" fill="#7a7a7a"/>
<polygon points="976,71 986,73.5 986,86.5 976,84" fill="#d0d0d0"/>
<polygon points="986,73.5 994,71 994,84 986,86.5" fill="#bdbdbd"/>
<polygon points="955.5,75 977,79.5 958.5,90" fill="#c92e20"/>
<polygon points="955.5,75 977,79.5 957,82" fill="#e04030"/>
<polygon points="991,80 1004,80.5 1003.5,93" fill="#1d3c96"/>
<polygon points="990,79.2 1006,78 1006.5,94.5" fill="#1e3e98"/>
<ellipse cx="1006.2" cy="86.3" rx="5.4" ry="8.4" fill="#2f6fe4"/>
<polygon points="984,86 987,86 990.5,104.5 980.5,104.5" fill="url(#wg)"/>
<ellipse cx="985.5" cy="104.5" rx="5" ry="1.6" fill="#f4f4f4"/>
<text x="981" y="47" font-family="Liberation Sans" font-size="11" fill="#ffffff" font-weight="bold">y</text>
<text x="943" y="87.5" font-family="Liberation Sans" font-size="10.5" fill="#ffffff" font-weight="bold">x</text>
<text x="1012" y="95" font-family="Liberation Sans" font-size="10.5" fill="#ffffff" font-weight="bold">z</text>
<path d="M1017.6 45.5 V43.6 A2.3 2.3 0 0 1 1022.2 43.6 V44.5" fill="none" stroke="#a8a8a8" stroke-width="1.2"/>
<rect x="1016.4" y="45.8" width="6.8" height="4" fill="#a8a8a8"/>
<path d="M972 123.7 L962 128.4 L972 133.5 M962.5 128.4 H972" fill="none" stroke="#a8a8a8" stroke-width="1"/>
<text x="975.5" y="133" font-family="Liberation Sans" font-size="11" fill="#b8b8b8" letter-spacing="0.1">Persp</text>

</svg><!--/SCENE-->
</body></html>
